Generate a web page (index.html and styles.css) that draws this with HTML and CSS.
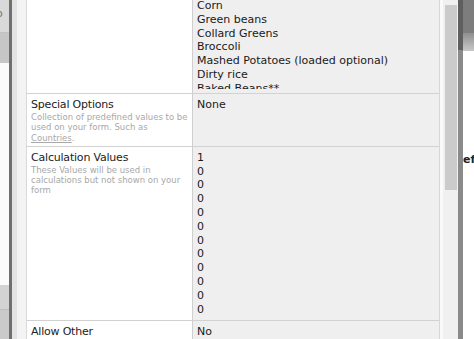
FILE: index.html
```html
<!DOCTYPE html>
<html>
<head>
<meta charset="utf-8">
<link rel="stylesheet" href="styles.css">
</head>
<body>
<div class="screen">
  <div class="bg-left">
    <div class="bl bl1"><span class="peek">o</span></div>
    <div class="bl bl2"></div>
    <div class="bl bl3"></div>
    <div class="bl bl4"></div>
    <div class="bl bl5"></div>
  </div>
  <div class="frame frame-l"></div>
  <div class="modal">
    <div class="gutter"><div class="g1"></div><div class="g2"></div></div>
    <div class="props">
      <div class="cell label-cell first"></div>
      <div class="cell value-cell first">
        <div class="list">
          <div>Corn</div>
          <div>Green beans</div>
          <div>Collard Greens</div>
          <div>Broccoli</div>
          <div>Mashed Potatoes (loaded optional)</div>
          <div>Dirty rice</div>
          <div>Baked Beans**</div>
        </div>
      </div>

      <div class="cell label-cell">
        <div class="label">Special Options</div>
        <div class="desc">Collection of predefined values to be used on your form. Such as <span class="link">Countries</span>.</div>
      </div>
      <div class="cell value-cell"><div class="vals">None</div></div>

      <div class="cell label-cell">
        <div class="label">Calculation Values</div>
        <div class="desc">These Values will be used in calculations but not shown on your form</div>
      </div>
      <div class="cell value-cell">
        <div class="vals">
          <div>1</div><div>0</div><div>0</div><div>0</div><div>0</div><div>0</div>
          <div>0</div><div>0</div><div>0</div><div>0</div><div>0</div><div>0</div>
        </div>
      </div>

      <div class="cell label-cell">
        <div class="label">Allow Other</div>
      </div>
      <div class="cell value-cell"><div class="vals">No</div></div>
    </div>
    <div class="gap"></div>
    <div class="scrollbar"><div class="thumb"></div></div>
  </div>
  <div class="frame frame-r"></div>
  <div class="bg-right">
    <div class="br-top"></div>
    <div class="br-fade"></div>
    <div class="br-text">ef c</div>
  </div>
</div>
</body>
</html>
```

FILE: styles.css
```css
html, body {
  margin: 0;
  padding: 0;
  background: #ffffff;
  overflow: hidden;
}
.screen {
  display: flex;
  width: 474px;
  height: 339px;
  overflow: hidden;
  font-family: "DejaVu Sans", Verdana, sans-serif;
}
.bg-left {
  width: 9px;
  flex: none;
  display: flex;
  flex-direction: column;
}
.bl { flex: none; overflow: hidden; }
.bl1 { height: 33px; background: #d9d9d9; border-bottom: 1px solid #c2c2c2; box-sizing: border-box; }
.bl2 { height: 30px; background: #c6c6c6; }
.bl3 { height: 222px; background: #fbfbfb; }
.bl4 { height: 25px; background: #d3d3d3; border-bottom: 1px solid #bdbdbd; box-sizing: border-box; }
.bl5 { flex: 1; background: #cacaca; }
.peek {
  display: block;
  margin: 8px 0 0 -4px;
  font-size: 11px;
  color: #777;
  line-height: 12px;
}
.frame { flex: none; }
.frame-l { width: 3px; background: #6f6f6f; }
.frame-r { width: 5px; background: linear-gradient(#5f5f5f 0 50px, #8a8a8a 50px); }
.modal {
  flex: none;
  display: flex;
  align-items: flex-start;
  width: 446px;
  height: 339px;
  background: #ffffff;
}
.gutter { display: flex; height: 339px; flex: none; }
.g1 { width: 5px; background: #e3e3e3; }
.g2 { width: 9px; background: #f3f3f3; }
.props {
  flex: none;
  display: grid;
  grid-template-columns: 166px 246px;
  border-left: 1px solid #dadada;
  border-right: 1px solid #d6d6d6;
  color: #1a1a1a;
}
.cell {
  box-sizing: border-box;
  border-bottom: 1px solid #d2d2d2;
  padding: 4px 4px 3px 4px;
}
.label-cell {
  background: #ffffff;
  border-right: 1px solid #cfcfcf;
}
.value-cell {
  background: #efefef;
  padding-bottom: 4px;
}
.label-cell.first { padding: 0; }
.value-cell.first { padding: 0 4px 4px 4px; }
.list {
  margin-top: -1px;
  height: 90px;
  overflow: hidden;
  font-size: 11px;
  line-height: 13.8px;
}
.vals {
  font-size: 11px;
  line-height: 13.8px;
}
.label {
  font-size: 11px;
  letter-spacing: -0.2px;
  line-height: 13px;
  color: #222;
}
.desc {
  margin-top: 1px;
  font-size: 8.5px;
  line-height: 10.3px;
  color: #a8a8a8;
}
.link { text-decoration: underline; }
.gap { width: 3px; height: 339px; flex: none; background: #fafafa; }
.scrollbar {
  width: 15px;
  height: 339px;
  flex: none;
  box-sizing: border-box;
  background: #f0f0f0;
  padding: 5px 1px 0 2px;
}
.thumb { height: 185px; background: #cbcbcb; }
.bg-right {
  width: 11px;
  flex: none;
  display: flex;
  flex-direction: column;
  overflow: hidden;
}
.br-top { height: 33px; background: #7d7d7d; flex: none; }
.br-fade { height: 18px; background: linear-gradient(#8f8f8f, #c8c8c8); flex: none; }
.br-text {
  margin-top: 102px;
  font-size: 11px;
  font-weight: bold;
  line-height: 13px;
  color: #222;
  white-space: nowrap;
}
```
